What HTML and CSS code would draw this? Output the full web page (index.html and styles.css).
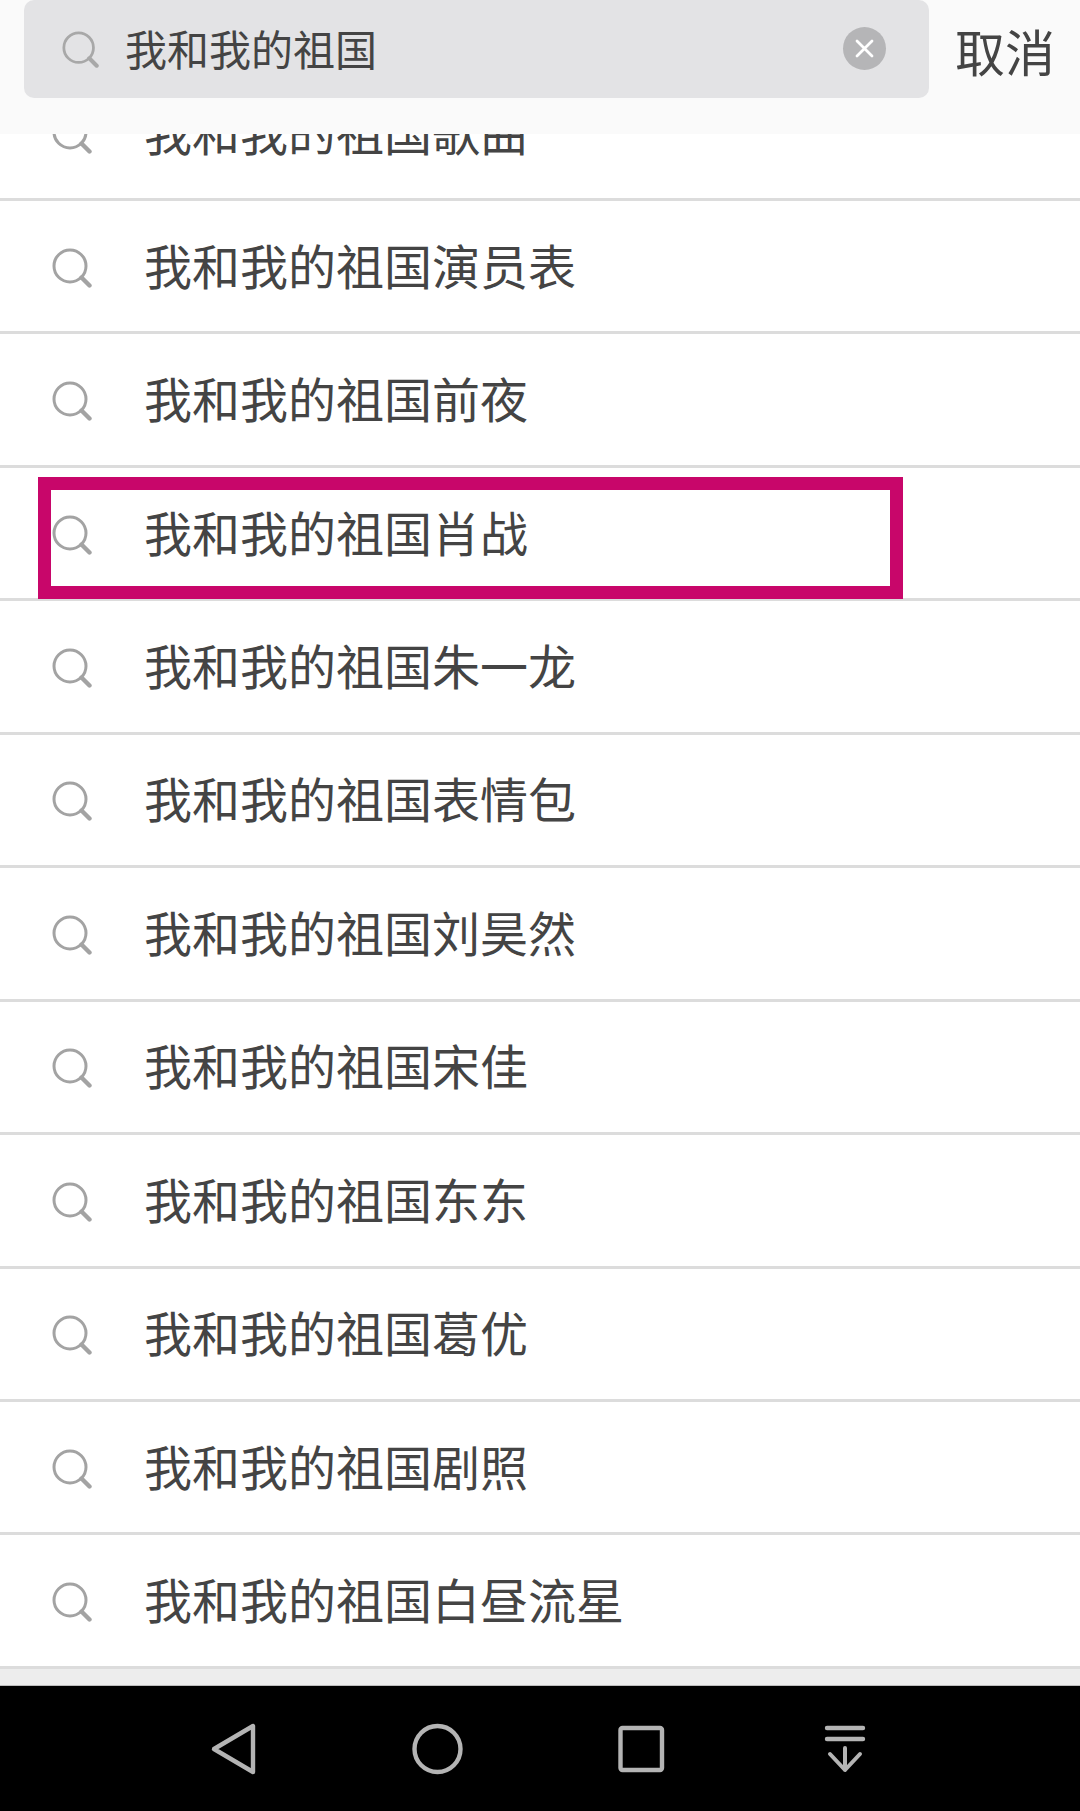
FILE: index.html
```html
<!DOCTYPE html>
<html lang="zh-CN">
<head>
    <meta charset="UTF-8">
    <meta name="viewport" content="width=device-width, initial-scale=1.0">
    <title>搜索</title>
    <link rel="stylesheet" href="styles.css">
</head>
<body>
    <svg class="defs" width="0" height="0">
        <symbol id="icon-search" viewBox="0 0 40 40">
            <circle cx="18" cy="18" r="16" fill="none" stroke="currentColor" stroke-width="3"/>
            <path d="M29.5 29.5L37.5 37.5" fill="none" stroke="currentColor" stroke-width="4.400" stroke-linecap="round"/>
        </symbol>
    </svg>

    <div class="page">
        <header class="topbar">
            <div class="search-box">
                <svg class="search-icon"><use href="#icon-search"/></svg>
                <span class="search-text">我和我的祖国</span>
                <span class="clear">
                    <svg width="43" height="43" viewBox="0 0 43 43">
                        <path d="M14 14L29 29M29 14L14 29" stroke="#fff" stroke-width="2.800" stroke-linecap="round"/>
                    </svg>
                </span>
            </div>
            <span class="cancel">取消</span>
        </header>

        <div class="list">
            <div class="rows">
                <div class="row"><svg class="row-icon"><use href="#icon-search"/></svg><span class="row-text">我和我的祖国歌曲</span></div>
                <div class="row"><svg class="row-icon"><use href="#icon-search"/></svg><span class="row-text">我和我的祖国演员表</span></div>
                <div class="row"><svg class="row-icon"><use href="#icon-search"/></svg><span class="row-text">我和我的祖国前夜</span></div>
                <div class="row"><svg class="row-icon"><use href="#icon-search"/></svg><span class="row-text">我和我的祖国肖战</span><div class="marker"></div></div>
                <div class="row"><svg class="row-icon"><use href="#icon-search"/></svg><span class="row-text">我和我的祖国朱一龙</span></div>
                <div class="row"><svg class="row-icon"><use href="#icon-search"/></svg><span class="row-text">我和我的祖国表情包</span></div>
                <div class="row"><svg class="row-icon"><use href="#icon-search"/></svg><span class="row-text">我和我的祖国刘昊然</span></div>
                <div class="row"><svg class="row-icon"><use href="#icon-search"/></svg><span class="row-text">我和我的祖国宋佳</span></div>
                <div class="row"><svg class="row-icon"><use href="#icon-search"/></svg><span class="row-text">我和我的祖国东东</span></div>
                <div class="row"><svg class="row-icon"><use href="#icon-search"/></svg><span class="row-text">我和我的祖国葛优</span></div>
                <div class="row"><svg class="row-icon"><use href="#icon-search"/></svg><span class="row-text">我和我的祖国剧照</span></div>
                <div class="row"><svg class="row-icon"><use href="#icon-search"/></svg><span class="row-text">我和我的祖国白昼流星</span></div>
            </div>
        </div>

        <nav class="navbar">
            <div class="nav-item">
                <svg width="60" height="60" viewBox="0 0 60 60">
                    <path d="M50 7V53L11 30Z" fill="none" stroke="#b4b4b4" stroke-width="4.400" stroke-linejoin="round"/>
                </svg>
            </div>
            <div class="nav-item">
                <svg width="60" height="60" viewBox="0 0 60 60">
                    <circle cx="30.500" cy="30" r="23" fill="none" stroke="#b4b4b4" stroke-width="4.400"/>
                </svg>
            </div>
            <div class="nav-item">
                <svg width="60" height="60" viewBox="0 0 60 60">
                    <rect x="9.500" y="9" width="41.500" height="42" rx="2" fill="none" stroke="#b4b4b4" stroke-width="4.400"/>
                </svg>
            </div>
            <div class="nav-item">
                <svg width="60" height="60" viewBox="0 0 60 60">
                    <path d="M12 9H48M12 20H48" fill="none" stroke="#b4b4b4" stroke-width="4.400" stroke-linecap="round"/>
                    <path d="M30 29V51M15 35L30 51L45 35" fill="none" stroke="#b4b4b4" stroke-width="4" stroke-linecap="round" stroke-linejoin="round"/>
                </svg>
            </div>
        </nav>
    </div>
</body>
</html>
```

FILE: styles.css
```css
body {
    margin: 0;
    font-family: "Noto Sans CJK SC", "Liberation Sans", sans-serif;
    color: #444;
}
.defs {
    display: block;
    height: 0;
}
.page {
    display: flex;
    flex-direction: column;
    height: 1811px;
    overflow: hidden;
}
.topbar {
    display: flex;
    align-items: flex-start;
    flex: none;
    height: 134px;
    padding-left: 24px;
    background-color: #fafafa;
}
.search-box {
    display: flex;
    align-items: center;
    width: 905px;
    height: 98px;
    padding-left: 38px;
    box-sizing: border-box;
    background-color: #e3e3e5;
    border-radius: 10px;
}
.search-icon {
    width: 37px;
    height: 37px;
    color: #a8a8a8;
}
.search-text {
    margin: 0 0 2px 26px;
    font-size: 42px;
    line-height: 1;
}
.clear {
    display: block;
    width: 43px;
    height: 43px;
    margin-left: auto;
    margin-right: 43px;
    margin-top: -2px;
    background-color: #b5b5b7;
    border-radius: 50%;
}
.clear svg {
    display: block;
}
.cancel {
    margin: 25px 0 0 26px;
    font-size: 50px;
    line-height: 1;
}
.list {
    flex: 1;
    overflow: hidden;
    background-color: #ededed;
}
.rows {
    margin-top: -66.450px;
}
.row {
    position: relative;
    display: flex;
    align-items: center;
    height: 133.450px;
    box-sizing: border-box;
    padding-left: 52px;
    background-color: #fff;
    border-bottom: 3px solid #dcdcdc;
    font-size: 48px;
    line-height: 1;
}
.row-icon {
    flex: none;
    width: 40px;
    height: 40px;
    margin: 3px 52px 0 0;
    color: #a3a3a3;
}
.row-text {
    margin-bottom: 5px;
}
.marker {
    position: absolute;
    left: 38px;
    top: 9px;
    width: 865px;
    height: 122px;
    box-sizing: border-box;
    border: 13px solid #c8066a;
}
.navbar {
    display: flex;
    align-items: center;
    flex: none;
    height: 126px;
    padding-left: 131px;
    background-color: #000;
    border-top: 1px solid #bdbdbd;
    box-sizing: border-box;
}
.nav-item {
    display: flex;
    justify-content: center;
    width: 204px;
}
```
